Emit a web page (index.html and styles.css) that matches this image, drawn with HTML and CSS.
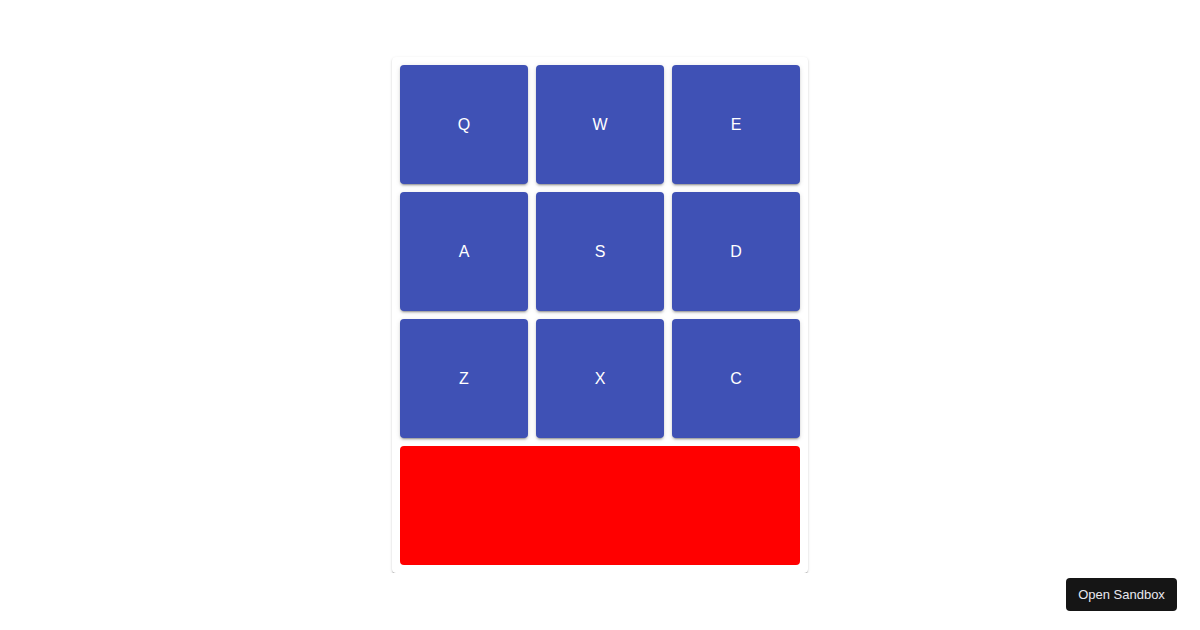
FILE: index.html
```html
<!DOCTYPE html>
<html>
<head>
<meta charset="utf-8">
<link rel="stylesheet" href="styles.css">
</head>
<body>
<div class="page">
  <div class="card">
    <div class="tile">Q</div>
    <div class="tile">W</div>
    <div class="tile">E</div>
    <div class="tile">A</div>
    <div class="tile">S</div>
    <div class="tile">D</div>
    <div class="tile">Z</div>
    <div class="tile">X</div>
    <div class="tile">C</div>
    <div class="bar"></div>
  </div>
</div>
<a class="sandbox">Open Sandbox</a>
</body>
</html>
```
FILE: styles.css
```css
html, body {
  margin: 0;
  padding: 0;
  background: #fff;
  font-family: "Liberation Sans", Arial, sans-serif;
}
.page {
  display: flex;
  justify-content: center;
  padding-top: 57px;
}
.card {
  width: 400px;
  padding: 8px;
  display: grid;
  grid-template-columns: repeat(3, 128px);
  grid-auto-rows: 119px;
  gap: 8px;
  background: #fff;
  border-radius: 4px;
  box-shadow: 0 2px 1px -1px rgba(0,0,0,0.25), 0 1px 1px 0 rgba(0,0,0,0.16), 0 1px 3px 0 rgba(0,0,0,0.14);
}
.tile {
  background: #3f51b5;
  color: #fff;
  border-radius: 4px;
  display: flex;
  align-items: center;
  justify-content: center;
  font-size: 16px;
  box-shadow: 0 3px 1px -2px rgba(0,0,0,0.2), 0 2px 2px 0 rgba(0,0,0,0.14), 0 1px 5px 0 rgba(0,0,0,0.12);
}
.bar {
  grid-column: 1 / 4;
  background: #ff0000;
  border-radius: 4px;
}
.sandbox {
  position: fixed;
  right: 23px;
  bottom: 19px;
  width: 111px;
  height: 33px;
  box-sizing: border-box;
  display: flex;
  align-items: center;
  justify-content: center;
  background: #151515;
  color: #e8e8f0;
  border-radius: 4px;
  font-size: 13px;
}
```
